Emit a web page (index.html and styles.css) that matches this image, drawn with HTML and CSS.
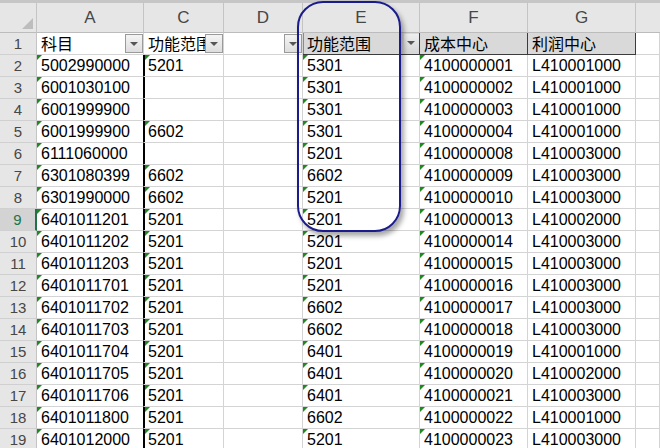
FILE: index.html
```html
<!DOCTYPE html>
<html>
<head>
<meta charset="utf-8">
<link rel="stylesheet" href="styles.css">
</head>
<body>
<div class="wrap">
  <div class="topstrip"></div>
  <div class="sheet">
    <div class="corner"><span class="corner-tri"></span></div>
    <div class="ch">A</div><div class="ch">C</div><div class="ch">D</div><div class="ch">E</div><div class="ch">F</div><div class="ch">G</div><div class="ch last"></div>

    <div class="rh">1</div>
    <div class="c hd">科目<span class="dd"></span></div>
    <div class="c hd cc"><span class="clip">功能范围</span><span class="dd"></span></div>
    <div class="c hd"><span class="dd"></span></div>
    <div class="c hd gr ge">功能范围<span class="dd"></span></div>
    <div class="c hd gr">成本中心</div>
    <div class="c hd gr">利润中心</div>
    <div class="c"></div>

    <div class="rh">2</div><div class="c a t">5002990000</div><div class="c k t">5201</div><div class="c"></div><div class="c t">5301</div><div class="c t">4100000001</div><div class="c">L410001000</div><div class="c"></div>
    <div class="rh">3</div><div class="c a t">6001030100</div><div class="c k"></div><div class="c"></div><div class="c t">5301</div><div class="c t">4100000002</div><div class="c">L410001000</div><div class="c"></div>
    <div class="rh">4</div><div class="c a t">6001999900</div><div class="c k"></div><div class="c"></div><div class="c t">5301</div><div class="c t">4100000003</div><div class="c">L410001000</div><div class="c"></div>
    <div class="rh">5</div><div class="c a t">6001999900</div><div class="c k t">6602</div><div class="c"></div><div class="c t">5301</div><div class="c t">4100000004</div><div class="c">L410001000</div><div class="c"></div>
    <div class="rh">6</div><div class="c a t">6111060000</div><div class="c k"></div><div class="c"></div><div class="c t">5201</div><div class="c t">4100000008</div><div class="c">L410003000</div><div class="c"></div>
    <div class="rh">7</div><div class="c a t">6301080399</div><div class="c k t">6602</div><div class="c"></div><div class="c t">6602</div><div class="c t">4100000009</div><div class="c">L410003000</div><div class="c"></div>
    <div class="rh">8</div><div class="c a t">6301990000</div><div class="c k t">6602</div><div class="c"></div><div class="c t">5201</div><div class="c t">4100000010</div><div class="c">L410003000</div><div class="c"></div>
    <div class="rh sel">9</div><div class="c a t">6401011201</div><div class="c k t">5201</div><div class="c"></div><div class="c t">5201</div><div class="c t">4100000013</div><div class="c">L410002000</div><div class="c"></div>
    <div class="rh">10</div><div class="c a t">6401011202</div><div class="c k t">5201</div><div class="c"></div><div class="c t">5201</div><div class="c t">4100000014</div><div class="c">L410003000</div><div class="c"></div>
    <div class="rh">11</div><div class="c a t">6401011203</div><div class="c k t">5201</div><div class="c"></div><div class="c t">5201</div><div class="c t">4100000015</div><div class="c">L410003000</div><div class="c"></div>
    <div class="rh">12</div><div class="c a t">6401011701</div><div class="c k t">5201</div><div class="c"></div><div class="c t">5201</div><div class="c t">4100000016</div><div class="c">L410003000</div><div class="c"></div>
    <div class="rh">13</div><div class="c a t">6401011702</div><div class="c k t">5201</div><div class="c"></div><div class="c t">6602</div><div class="c t">4100000017</div><div class="c">L410003000</div><div class="c"></div>
    <div class="rh">14</div><div class="c a t">6401011703</div><div class="c k t">5201</div><div class="c"></div><div class="c t">6602</div><div class="c t">4100000018</div><div class="c">L410003000</div><div class="c"></div>
    <div class="rh">15</div><div class="c a t">6401011704</div><div class="c k t">5201</div><div class="c"></div><div class="c t">6401</div><div class="c t">4100000019</div><div class="c">L410001000</div><div class="c"></div>
    <div class="rh">16</div><div class="c a t">6401011705</div><div class="c k t">5201</div><div class="c"></div><div class="c t">6401</div><div class="c t">4100000020</div><div class="c">L410002000</div><div class="c"></div>
    <div class="rh">17</div><div class="c a t">6401011706</div><div class="c k t">5201</div><div class="c"></div><div class="c t">6401</div><div class="c t">4100000021</div><div class="c">L410003000</div><div class="c"></div>
    <div class="rh">18</div><div class="c a t">6401011800</div><div class="c k t">5201</div><div class="c"></div><div class="c t">6602</div><div class="c t">4100000022</div><div class="c">L410001000</div><div class="c"></div>
    <div class="rh">19</div><div class="c a t">6401012000</div><div class="c k t">5201</div><div class="c"></div><div class="c t">5201</div><div class="c t">4100000023</div><div class="c">L410003000</div><div class="c"></div>
  </div>
  <div class="ring"></div>
</div>
</body>
</html>
```

FILE: styles.css
```css
html, body {
  margin: 0;
  padding: 0;
  background: #ffffff;
  overflow: hidden;
}
.wrap {
  position: relative;
  width: 660px;
  height: 448px;
  overflow: hidden;
  font-family: "Liberation Sans", Arial, "Noto Sans CJK SC", sans-serif;
  font-size: 16px;
  color: #000;
}
.topstrip {
  height: 3px;
  background: #c6c6c6;
}
.sheet {
  display: grid;
  grid-template-columns: 37px 107px 80px 79px 117px 108px 108px 1fr;
  grid-template-rows: 30px;
  grid-auto-rows: 22px;
}
.corner, .ch, .rh {
  box-sizing: border-box;
  background: #e6e6e6;
  color: #474747;
  border-right: 1px solid #c4c4c4;
  border-bottom: 1px solid #bcbcbc;
}
.corner {
  position: relative;
}
.corner-tri {
  position: absolute;
  right: 3px;
  bottom: 3px;
  width: 0;
  height: 0;
  border-left: 11px solid transparent;
  border-bottom: 11px solid #bdbdbd;
}
.ch {
  display: flex;
  align-items: flex-end;
  justify-content: center;
  padding-bottom: 4px;
  font-size: 17px;
}
.ch.last {
  border-right: none;
}
.rh {
  display: flex;
  align-items: center;
  justify-content: center;
  font-size: 15px;
  border-bottom-color: #d0d0d0;
}
.rh.sel {
  background: #d3d3d3;
  color: #217346;
  border-right: 2px solid #217346;
}
.c {
  position: relative;
  box-sizing: border-box;
  border-right: 1px solid #d4d4d4;
  border-bottom: 1px solid #d4d4d4;
  padding: 1px 0 0 4px;
  line-height: 20px;
  white-space: nowrap;
}
.c.a {
  border-right-color: #000;
}
.c.k {
  box-shadow: inset 1px 0 0 #000;
}
.c.t::before {
  content: "";
  position: absolute;
  left: 0;
  top: 0;
  width: 0;
  height: 0;
  border-top: 5px solid #1d8a1d;
  border-right: 5px solid transparent;
}
.c.k.t::before {
  left: 1px;
}
.hd {
  font-family: "Noto Sans CJK SC", "Liberation Sans", sans-serif;
  font-size: 16px;
  line-height: 21px;
  padding-top: 0;
}
.clip {
  display: block;
  width: 62px;
  overflow: hidden;
}
.hd.gr {
  background: #d9d9d9;
  border-right-color: #3c3c3c;
  border-bottom-color: #3c3c3c;
}
.hd.ge {
  box-shadow: inset 1px 0 0 #8a8a8a;
}
.dd {
  position: absolute;
  right: 0;
  top: 1px;
  width: 18px;
  height: 19px;
  box-sizing: border-box;
  border: 1px solid #9a9a9a;
  background: linear-gradient(#f4f4f4, #dedede);
}
.dd::after {
  content: "";
  position: absolute;
  left: 4px;
  top: 7px;
  width: 0;
  height: 0;
  border-left: 4px solid transparent;
  border-right: 4px solid transparent;
  border-top: 4px solid #555;
}
.ge .dd {
  width: 15px;
  border: none;
  background: linear-gradient(#eeeeee, #d6d6d6);
}
.ge .dd::after {
  left: 3px;
}
.ring {
  position: absolute;
  left: 297px;
  top: 1px;
  width: 104px;
  height: 231px;
  box-sizing: border-box;
  border: 2px solid #1b1b8c;
  border-radius: 26px;
  box-shadow: 3px 4px 5px rgba(0, 0, 0, 0.35);
}
```
